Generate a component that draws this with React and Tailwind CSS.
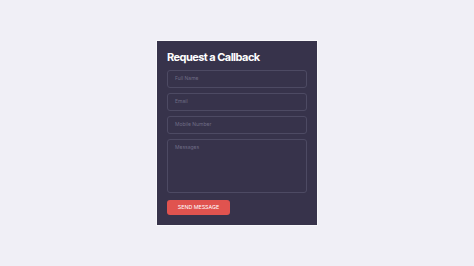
export default function App() {
  const font = { fontFamily: "Inter, 'Noto Sans', sans-serif" };
  return (
    <div className="min-h-screen w-full bg-[#f0eff6] flex items-center justify-center" style={font}>
      <div className="w-[162px] bg-[#37334b] border border-[#f7f7fa] px-[10px] pt-[9px] pb-[10px] flex flex-col">
        <h2 className="text-[11px] leading-[14px] font-bold text-white tracking-[-0.55px]">Request a Callback</h2>
        <div className="mt-[6px] flex flex-col gap-[5.5px]">
          {["Full Name", "Email", "Mobile Number"].map((p) => (
            <div key={p} className="h-[17.5px] shrink-0 rounded-[3px] border border-[#4d4a63] px-[7px] flex items-center">
              <span className="text-[5px] text-[#6f6c85]">{p}</span>
            </div>
          ))}
          <div className="h-[54px] shrink-0 rounded-[3px] border border-[#4d4a63] px-[7px] pt-[4px]">
            <span className="text-[5px] text-[#6f6c85] block">Messages</span>
          </div>
        </div>
        <button className="mt-[7px] w-[63px] h-[15px] shrink-0 rounded-[3px] bg-[#e0534f] text-white text-[5.3px] flex items-center justify-center">
          SEND MESSAGE
        </button>
      </div>
    </div>
  );
}
